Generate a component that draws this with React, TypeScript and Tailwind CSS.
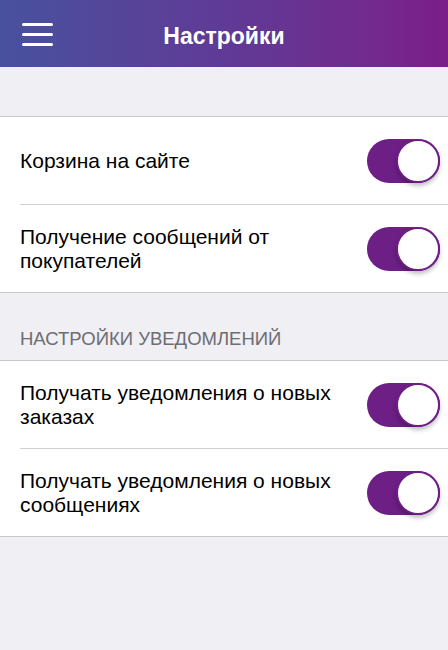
import React from "react";

function Toggle() {
  return (
    <div className="relative w-[73px] h-[44px] rounded-full bg-[#6e1f86] shrink-0">
      <div className="absolute right-0 top-0 w-[44px] h-[44px] rounded-full bg-white border-2 border-[#6e1f86] shadow-[0_3px_4px_rgba(0,0,0,0.25)]" />
    </div>
  );
}

function Row({ text, last }: { text: React.ReactNode; last?: boolean }) {
  return (
    <div className="pl-5">
      <div
        className={
          "flex items-center justify-between pr-2 " +
          (last ? "h-[87px]" : "h-[88px] border-b border-[#d0d0d4]")
        }
      >
        <div className="text-[21px] leading-[24px] text-black">{text}</div>
        <Toggle />
      </div>
    </div>
  );
}

export default function App() {
  return (
    <div
      className="w-[448px] h-[650px] bg-[#efeff4] overflow-hidden"
      style={{ fontFamily: '"Liberation Sans", Arial, sans-serif' }}
    >
      <div className="h-[67px] bg-gradient-to-r from-[#47519e] via-[#5f3a96] to-[#7b1d8a] flex items-center relative">
        <div className="absolute left-[22px] top-[23px] w-[31px] flex flex-col gap-[7px]">
          <div className="h-[3px] bg-white rounded-full" />
          <div className="h-[3px] bg-white rounded-full" />
          <div className="h-[3px] bg-white rounded-full" />
        </div>
        <div className="w-full text-center text-white font-bold text-[23px] pt-[5px]">
          Настройки
        </div>
      </div>
      <div className="h-[49px]" />
      <div className="bg-white border-t border-b border-[#c8c7cc]">
        <Row text="Корзина на сайте" />
        <Row text={<>Получение сообщений от<br />покупателей</>} last />
      </div>
      <div className="h-[67px] flex items-end pb-[10px] pl-5 text-[18.5px] leading-[22px] text-[#6d6d72]">
        НАСТРОЙКИ УВЕДОМЛЕНИЙ
      </div>
      <div className="bg-white border-t border-b border-[#c8c7cc]">
        <Row text={<>Получать уведомления о новых<br />заказах</>} />
        <Row text={<>Получать уведомления о новых<br />сообщениях</>} last />
      </div>
    </div>
  );
}
